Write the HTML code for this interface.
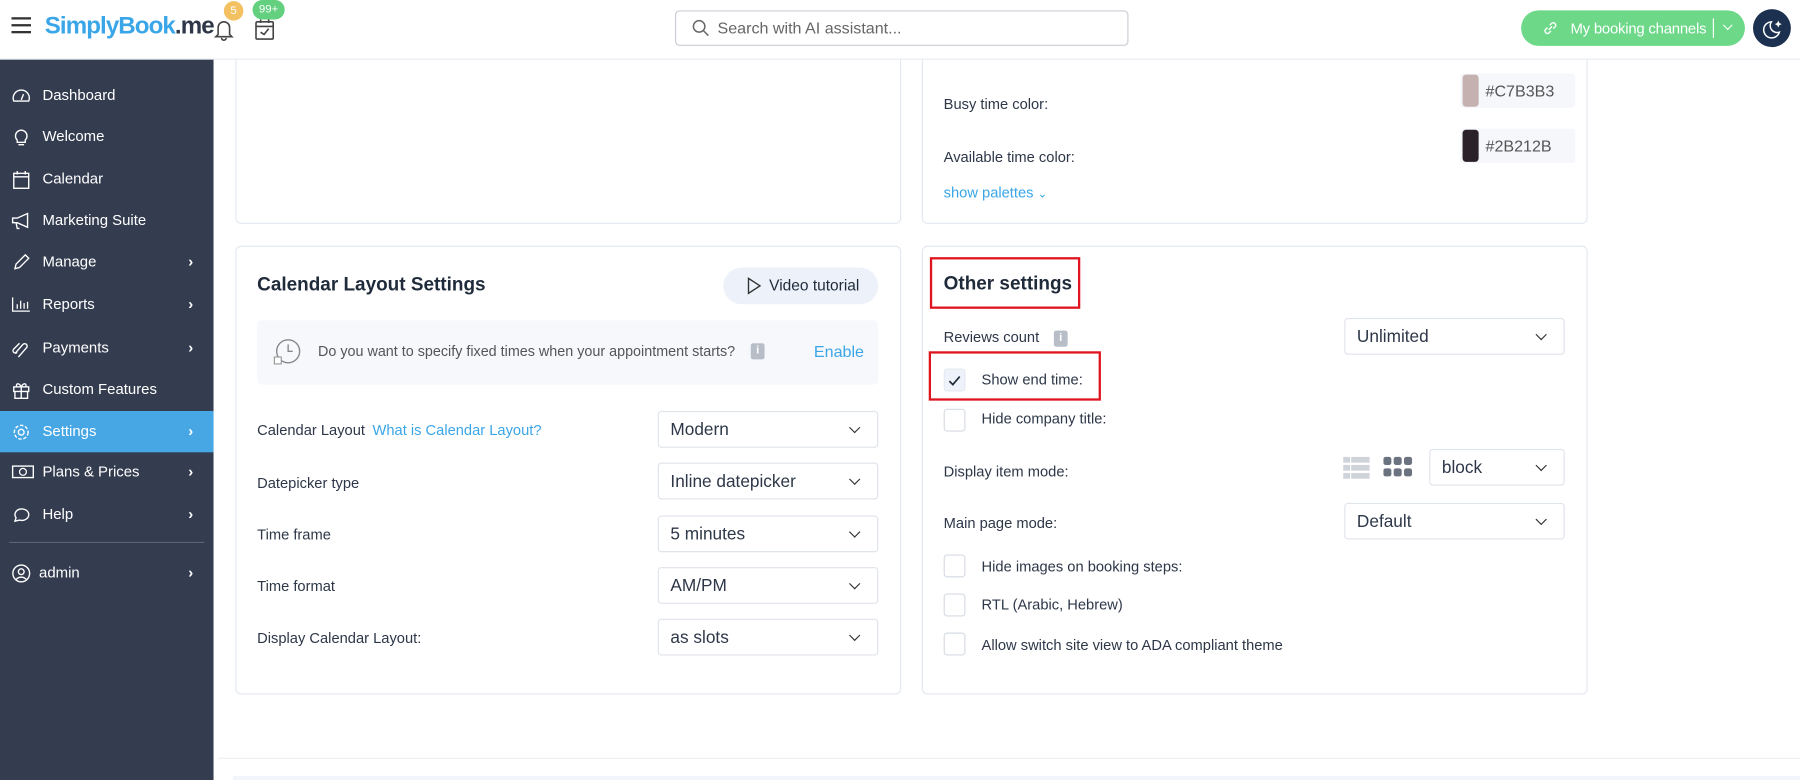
<!DOCTYPE html>
<html><head><meta charset="utf-8">
<style>
*{box-sizing:border-box;margin:0;padding:0}
html,body{width:1800px;height:780px;overflow:hidden;background:#fff}
#w{width:1568px;height:680px;transform:scale(1.148);transform-origin:0 0;position:relative;font-family:"Liberation Sans",sans-serif;color:#2d3748;font-size:13px}
.a{position:absolute}
.hdr{left:0;top:0;width:1568px;height:52px;border-bottom:1px solid #e6ebf2;background:#fff}
.side{left:0;top:52px;width:186px;height:628px;background:#343d50}
.si{position:absolute;left:0;width:186px;height:36px;color:#fff;font-size:13px;line-height:36px}
.si span{position:absolute;left:37px}
.si svg{position:absolute;left:10px;top:10px}
.si .ch{position:absolute;left:164px;top:0;font-size:13px}
.card{border:1px solid #e3e8f0;border-radius:5px;background:#fff}
.sel{position:absolute;height:32px;border:1px solid #dfe3ea;border-radius:3px;background:#fff;font-size:15px;line-height:32px;padding-left:10px;color:#2d3748}
.sel:after{content:"";position:absolute;right:16px;top:10px;width:6px;height:6px;border-right:1.5px solid #333;border-bottom:1.5px solid #333;transform:rotate(45deg)}
.lbl{position:absolute;font-size:12.8px;color:#2d3748}
.cb{position:absolute;width:19px;height:20px;border:1px solid #d6dbe3;border-radius:3px;background:#fff}
.red{position:absolute;border:2px solid #e0141e}
</style></head><body><div id="w">
<!-- top cards -->
<div class="a card" style="left:205px;top:30px;width:580px;height:165px"></div>
<div class="a card" style="left:803px;top:30px;width:580px;height:165px"></div>
<div class="a hdr"></div>
<!-- hamburger -->
<div class="a" style="left:10px;top:15px;width:17px;height:2px;background:#333"></div>
<div class="a" style="left:10px;top:21px;width:17px;height:2px;background:#333"></div>
<div class="a" style="left:10px;top:27px;width:17px;height:2px;background:#333"></div>
<div class="a" style="left:39px;top:11px;font-size:21px;font-weight:bold;letter-spacing:-0.8px;color:#3aa6e8">SimplyBook<span style="color:#2d3748">.me</span></div>
<svg class="a" style="left:186px;top:16px" width="18" height="20" viewBox="0 0 18 20"><path d="M4 14V8a5 5 0 0 1 10 0v6l2 2H2z M7 17a2 2 0 0 0 4 0" fill="none" stroke="#444" stroke-width="1.4"/></svg>
<div class="a" style="left:195px;top:1px;width:17px;height:17px;border-radius:50%;background:#f3c062;color:#fff;font-size:10px;text-align:center;line-height:17px">5</div>
<svg class="a" style="left:222px;top:16px" width="17" height="19" viewBox="0 0 17 19"><rect x="1" y="3" width="15" height="15" rx="1" fill="none" stroke="#444" stroke-width="1.4"/><path d="M1 7h15M5 1v3M12 1v3M5 12l3 2 4-5" fill="none" stroke="#444" stroke-width="1.4"/></svg>
<div class="a" style="left:220px;top:0px;width:28px;height:17px;border-radius:9px;background:#62d07e;color:#fff;font-size:10px;text-align:center;line-height:17px">99+</div>
<div class="a" style="left:588px;top:9px;width:395px;height:31px;border:1px solid #c9cdd3;border-radius:4px;font-size:14px;color:#666;line-height:29px;padding-left:36px">Search with AI assistant...</div>
<svg class="a" style="left:603px;top:17px" width="15" height="15" viewBox="0 0 15 15"><circle cx="6" cy="6" r="5" fill="none" stroke="#666" stroke-width="1.3"/><path d="M10 10l4 4" stroke="#666" stroke-width="1.3"/></svg>
<div class="a" style="left:1325px;top:9px;width:195px;height:31px;border-radius:16px;background:#6cd888;color:#fff;font-size:13px;letter-spacing:-0.2px;line-height:31px;padding-left:43px">My booking channels</div>
<svg class="a" style="left:1343px;top:17px" width="15" height="15" viewBox="0 0 15 15"><path d="M6 9l3-3M5 7L3 9a2.3 2.3 0 0 0 3 3l2-2M10 8l2-2a2.3 2.3 0 0 0-3-3L7 5" fill="none" stroke="#fff" stroke-width="1.2"/></svg>
<div class="a" style="left:1492px;top:16px;width:1px;height:17px;background:#fff"></div>
<div class="a" style="left:1502px;top:19px;width:6px;height:6px;border-right:1.3px solid #fff;border-bottom:1.3px solid #fff;transform:rotate(45deg)"></div>
<div class="a" style="left:1527px;top:8px;width:33px;height:33px;border-radius:50%;background:#1c3150"></div>
<svg class="a" style="left:1533px;top:14px" width="22" height="22" viewBox="0 0 22 22"><path d="M10 5a7 7 0 1 0 7 9 6 6 0 0 1-7-9z" fill="none" stroke="#fff" stroke-width="1.3"/><path d="M16 4l1 2 2 1-2 1-1 2-1-2-2-1 2-1z" fill="#fff"/></svg>

<div class="a side"></div>
<div class="a" style="left:0;top:358px;width:186px;height:36px;background:#47a7e5"></div>
<div class="si" style="top:65px"><svg width="17" height="16"><path d="M2 13a7 7 0 1 1 13 0z M8.5 12l2-5" fill="none" stroke="#fff" stroke-width="1.2"/></svg><span>Dashboard</span></div>
<div class="si" style="top:101px"><svg width="17" height="17"><path d="M5 11a5 5 0 1 1 7 0v2H5z M6 15h5" fill="none" stroke="#fff" stroke-width="1.2"/></svg><span>Welcome</span></div>
<div class="si" style="top:138px"><svg width="17" height="17"><rect x="2" y="3" width="13" height="13" fill="none" stroke="#fff" stroke-width="1.2"/><path d="M2 6h13M5 1v3M12 1v3" stroke="#fff" stroke-width="1.2"/></svg><span>Calendar</span></div>
<div class="si" style="top:174px"><svg width="17" height="17"><path d="M1 6h4l9-4v12L5 10H1z M4 10l1 5h2" fill="none" stroke="#fff" stroke-width="1.2"/></svg><span>Marketing Suite</span></div>
<div class="si" style="top:210px"><svg width="17" height="17"><path d="M3 14l1-4 8-8 3 3-8 8z" fill="none" stroke="#fff" stroke-width="1.2"/></svg><span>Manage</span><b class="ch">›</b></div>
<div class="si" style="top:247px"><svg width="17" height="17"><path d="M1 2v12h15M5 12V8M8 12V5M11 12V7M14 12V6" fill="none" stroke="#fff" stroke-width="1.1"/></svg><span>Reports</span><b class="ch">›</b></div>
<div class="si" style="top:285px"><svg width="17" height="17"><path d="M3 13l7-8a2 2 0 0 1 3 3l-7 8M7 4l-5 5a2 2 0 0 0 3 3" fill="none" stroke="#fff" stroke-width="1.2"/></svg><span>Payments</span><b class="ch">›</b></div>
<div class="si" style="top:321px"><svg width="17" height="17"><rect x="2" y="6" width="13" height="4" fill="none" stroke="#fff" stroke-width="1.2"/><path d="M3 10v6h11v-6M8.5 6v10M8.5 6c-2-4-5-3-4 0M8.5 6c2-4 5-3 4 0" fill="none" stroke="#fff" stroke-width="1.2"/></svg><span>Custom Features</span></div>
<div class="si" style="top:358px"><svg width="17" height="17"><circle cx="8.5" cy="8.5" r="2.5" fill="none" stroke="#fff" stroke-width="1.2"/><circle cx="8.5" cy="8.5" r="6" fill="none" stroke="#fff" stroke-width="1.2" stroke-dasharray="3 1.5"/></svg><span>Settings</span><b class="ch">›</b></div>
<div class="si" style="top:393px"><svg width="20" height="17"><rect x="1" y="3" width="18" height="10" fill="none" stroke="#fff" stroke-width="1.2"/><circle cx="10" cy="8" r="3" fill="none" stroke="#fff" stroke-width="1.1"/></svg><span>Plans &amp; Prices</span><b class="ch">›</b></div>
<div class="si" style="top:430px"><svg width="17" height="17"><path d="M3 14l1-3a6 5 0 1 1 3 2z" fill="none" stroke="#fff" stroke-width="1.2"/></svg><span>Help</span><b class="ch">›</b></div>
<div class="si" style="top:481px"><svg width="17" height="17"><circle cx="8.5" cy="8.5" r="7.3" fill="none" stroke="#fff" stroke-width="1.2"/><circle cx="8.5" cy="7" r="2.5" fill="none" stroke="#fff" stroke-width="1.2"/><path d="M4 14a5 4 0 0 1 9 0" fill="none" stroke="#fff" stroke-width="1.2"/></svg><span style="left:34px">admin</span><b class="ch">›</b></div>

<div class="lbl" style="left:822px;top:83px">Busy time color:</div>
<div class="a" style="left:1272px;top:64px;width:100px;height:30px;background:#f5f7fb;border-radius:3px;font-size:14px;color:#555;line-height:30px;padding-left:22px">#C7B3B3</div>
<div class="a" style="left:1274px;top:65px;width:14px;height:28px;background:#c4b1b0;border-radius:3px"></div>
<div class="lbl" style="left:822px;top:129px">Available time color:</div>
<div class="a" style="left:1272px;top:112px;width:100px;height:30px;background:#f5f7fb;border-radius:3px;font-size:14px;color:#555;line-height:30px;padding-left:22px">#2B212B</div>
<div class="a" style="left:1274px;top:113px;width:14px;height:28px;background:#2b212b;border-radius:3px"></div>
<div class="lbl" style="left:822px;top:160px;color:#3aa6e8">show palettes <span style="font-size:10px">&#8964;</span></div>

<!-- left lower card -->
<div class="a card" style="left:205px;top:214px;width:580px;height:391px"></div>
<div class="a" style="left:224px;top:239px;font-size:16.5px;font-weight:bold;color:#1f2a3a">Calendar Layout Settings</div>
<div class="a" style="left:630px;top:233px;width:135px;height:32px;border-radius:16px;background:#edf2fa;font-size:13.5px;line-height:32px;padding-left:40px;color:#1f2a3a">Video tutorial</div>
<svg class="a" style="left:650px;top:241px" width="14" height="16"><path d="M2 1.5l10 6.5-10 6.5z" fill="none" stroke="#333" stroke-width="1.2"/></svg>
<div class="a" style="left:224px;top:279px;width:541px;height:56px;border-radius:4px;background:#f6f8fc"></div>
<svg class="a" style="left:236px;top:293px" width="28" height="28"><circle cx="15" cy="13" r="10" fill="none" stroke="#888" stroke-width="1.2"/><path d="M15 7v6h4" fill="none" stroke="#888" stroke-width="1.2"/><rect x="3" y="18" width="6" height="6" fill="#fff" stroke="#999"/></svg>
<div class="lbl" style="left:277px;top:299px;color:#555;font-size:12.5px">Do you want to specify fixed times when your appointment starts?</div>
<div class="a" style="left:654px;top:299px;width:12px;height:14px;background:#b8bec8;border-radius:2px;color:#fff;font-size:10px;text-align:center;line-height:14px;font-weight:bold">i</div>
<div class="lbl" style="left:709px;top:298px;color:#3aa6e8;font-size:14px">Enable</div>
<div class="lbl" style="left:224px;top:367px">Calendar Layout <span style="color:#3aa6e8;margin-left:3px">What is Calendar Layout?</span></div>
<div class="sel" style="left:573px;top:358px;width:192px">Modern</div>
<div class="lbl" style="left:224px;top:413px">Datepicker type</div>
<div class="sel" style="left:573px;top:403px;width:192px">Inline datepicker</div>
<div class="lbl" style="left:224px;top:458px">Time frame</div>
<div class="sel" style="left:573px;top:449px;width:192px">5 minutes</div>
<div class="lbl" style="left:224px;top:503px">Time format</div>
<div class="sel" style="left:573px;top:494px;width:192px">AM/PM</div>
<div class="lbl" style="left:224px;top:548px">Display Calendar Layout:</div>
<div class="sel" style="left:573px;top:539px;width:192px">as slots</div>

<!-- right lower card -->
<div class="a card" style="left:803px;top:214px;width:580px;height:391px"></div>
<div class="red" style="left:810px;top:224px;width:131px;height:45px"></div>
<div class="a" style="left:822px;top:238px;font-size:16.5px;font-weight:bold;color:#1f2a3a">Other settings</div>
<div class="lbl" style="left:822px;top:286px">Reviews count</div>
<div class="a" style="left:918px;top:288px;width:12px;height:14px;background:#b8bec8;border-radius:2px;color:#fff;font-size:10px;text-align:center;line-height:14px;font-weight:bold">i</div>
<div class="sel" style="left:1171px;top:277px;width:192px">Unlimited</div>
<div class="red" style="left:809px;top:306px;width:150px;height:43px"></div>
<div class="cb" style="left:822px;top:321px;background:#eef2fa;border-color:#e4e9f2"></div>
<svg class="a" style="left:825px;top:325px" width="14" height="14"><path d="M2 7l3 3 6-7" fill="none" stroke="#1f2a3a" stroke-width="1.5"/></svg>
<div class="lbl" style="left:855px;top:323px">Show end time:</div>
<div class="cb" style="left:822px;top:356px"></div>
<div class="lbl" style="left:855px;top:357px">Hide company title:</div>
<div class="lbl" style="left:822px;top:403px">Display item mode:</div>
<svg class="a" style="left:1170px;top:397px" width="24" height="22"><g fill="#cfd3da"><rect x="0" y="1" width="6" height="5"/><rect x="7" y="1" width="16" height="5"/><rect x="0" y="8" width="6" height="5"/><rect x="7" y="8" width="16" height="5"/><rect x="0" y="15" width="6" height="5"/><rect x="7" y="15" width="16" height="5"/></g></svg>
<svg class="a" style="left:1205px;top:397px" width="26" height="22"><g fill="#6b7280"><rect x="0" y="1" width="7" height="7" rx="2"/><rect x="9" y="1" width="7" height="7" rx="2"/><rect x="18" y="1" width="7" height="7" rx="2"/><rect x="0" y="11" width="7" height="7" rx="2"/><rect x="9" y="11" width="7" height="7" rx="2"/><rect x="18" y="11" width="7" height="7" rx="2"/></g></svg>
<div class="sel" style="left:1245px;top:391px;width:118px">block</div>
<div class="lbl" style="left:822px;top:448px">Main page mode:</div>
<div class="sel" style="left:1171px;top:438px;width:192px">Default</div>
<div class="cb" style="left:822px;top:483px"></div>
<div class="lbl" style="left:855px;top:486px">Hide images on booking steps:</div>
<div class="cb" style="left:822px;top:517px"></div>
<div class="lbl" style="left:855px;top:519px">RTL (Arabic, Hebrew)</div>
<div class="cb" style="left:822px;top:551px"></div>
<div class="lbl" style="left:855px;top:554px">Allow switch site view to ADA compliant theme</div>

<div class="a" style="left:8px;top:472px;width:170px;height:1px;background:#5a6375"></div>
<div class="a" style="left:190px;top:660px;width:1378px;height:1px;background:#eceff3"></div>
<div class="a" style="left:203px;top:676px;width:1365px;height:4px;background:#f2f5fb"></div>
</div></body></html>
